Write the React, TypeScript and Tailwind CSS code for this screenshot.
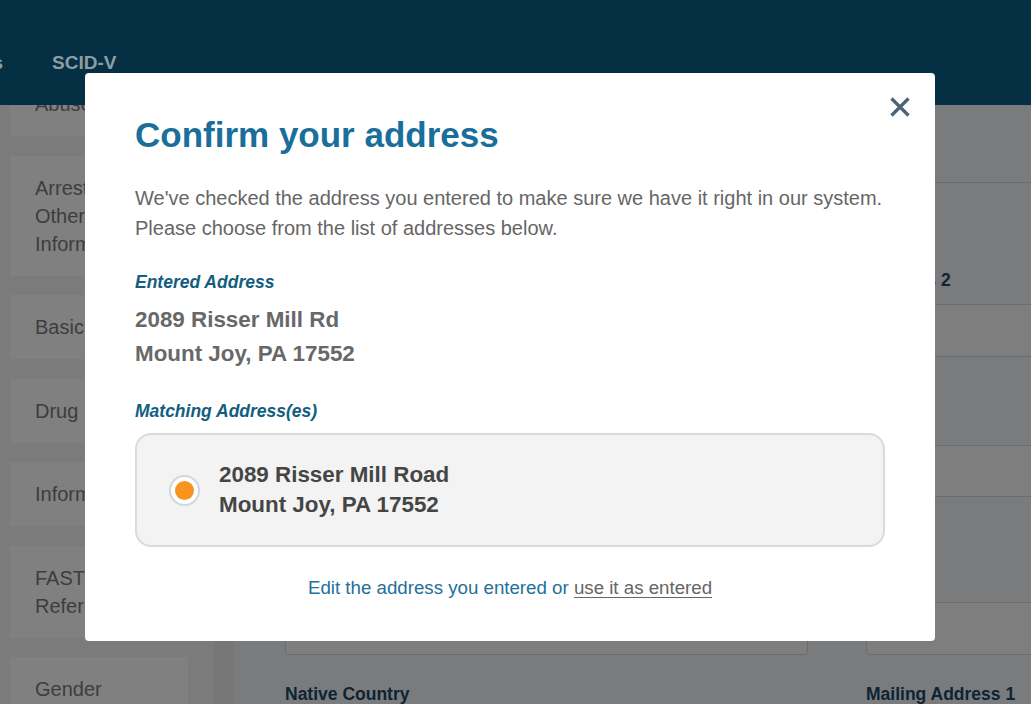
import React from "react";

function SideCard({ lines }: { lines: string[] }) {
  return (
    <div className="w-[178px] bg-[#808080] pl-[25px] py-[18px] text-[20px] leading-[28px] text-[#3d3d3d]">
      {lines.map((l, i) => (
        <div key={i} className="whitespace-nowrap">
          {l}
        </div>
      ))}
    </div>
  );
}

function Field({ label, h = "h-[53px]" }: { label: string; h?: string }) {
  return (
    <div>
      <div className="text-[17.5px] leading-[24px] font-bold text-[#0e2434] whitespace-nowrap">{label}</div>
      <div className={`mt-[12px] ${h} rounded-[4px] border border-[#6a6d70] bg-[#7e7e7e]`} />
    </div>
  );
}

export default function App() {
  return (
    <div className="relative h-[704px] w-[1031px] overflow-hidden bg-[#7a7b7d] font-['Liberation_Sans',Arial,sans-serif]">
      {/* header */}
      <header className="relative z-10 h-[105px] bg-[#052f42] flex items-start pt-[52px] text-[19px] leading-[22px] font-bold text-[#8e9ca4]">
        <div className="w-[3px] overflow-hidden flex justify-end">
          <span className="whitespace-nowrap">Reports</span>
        </div>
        <span className="ml-[49px] whitespace-nowrap">SCID-V</span>
      </header>

      {/* body */}
      <div className="flex h-[599px] overflow-hidden">
        <aside className="w-[213px] shrink-0 bg-[#7b7b7b] overflow-hidden">
          <div className="mt-[-61px] pl-[10px] flex flex-col gap-[19.5px]">
            <SideCard lines={["Child", "Abuse"]} />
            <SideCard lines={["Arrest and", "Other Legal", "Information"]} />
            <SideCard lines={["Basic Details"]} />
            <SideCard lines={["Drug Use"]} />
            <SideCard lines={["Informed Consent"]} />
            <SideCard lines={["FAST", "Referral"]} />
            <SideCard lines={["Gender", "Identity"]} />
          </div>
        </aside>
        <div className="w-[21px] shrink-0 bg-[#777777]" />
        <main className="flex-1 overflow-hidden pl-[51px]">
          <div className="h-[78px] border-b border-[#6a6d70] w-[1200px]" />
          <div className="grid grid-cols-[523px_523px] gap-x-[58px] w-[1104px]">
            <div className="mt-[85px]"><Field label="Address 1" /></div>
            <div className="mt-[85px]"><Field label="Address 2" /></div>
            <div className="mt-[52px]"><Field label="City" h="h-[52px]" /></div>
            <div className="mt-[52px]"><Field label="State" h="h-[52px]" /></div>
            <div className="mt-[69px]"><Field label="Zip Code" /></div>
            <div className="mt-[69px]"><Field label="County" /></div>
            <div className="mt-[27px] text-[17.5px] leading-[24px] font-bold text-[#0e2434]">Native Country</div>
            <div className="mt-[27px] text-[17.5px] leading-[24px] font-bold text-[#0e2434]">Mailing Address 1</div>
          </div>
        </main>
      </div>

      {/* modal */}
      <div className="absolute z-20 left-[85px] top-[73px] w-[850px] h-[568px] bg-white rounded-[4px] px-[50px] pt-[41px]">
        <button className="absolute left-[805px] top-[24px] w-[20px] h-[20px]" aria-label="Close">
          <svg width="20" height="20" viewBox="0 0 20 20">
            <path d="M1.5 1.5 L18.5 18.5 M18.5 1.5 L1.5 18.5" stroke="#4b6475" strokeWidth="3.2" fill="none" />
          </svg>
        </button>
        <h2 className="text-[35px] leading-[42px] font-bold text-[#1a6f9a] whitespace-nowrap">Confirm your address</h2>
        <p className="mt-[27px] text-[20px] leading-[30px] text-[#666666]">
          <span className="block whitespace-nowrap">We've checked the address you entered to make sure we have it right in our system.</span>
          <span className="block whitespace-nowrap">Please choose from the list of addresses below.</span>
        </p>
        <div className="mt-[26px] text-[17.5px] leading-[26px] font-bold italic text-[#135e7f]">Entered Address</div>
        <div className="mt-[8px] text-[22.4px] leading-[34px] font-bold text-[#686868]">
          <div>2089 Risser Mill Rd</div>
          <div>Mount Joy, PA 17552</div>
        </div>
        <div className="mt-[27px] text-[17.5px] leading-[26px] font-bold italic text-[#135e7f]">Matching Address(es)</div>
        <div className="mt-[9px] border-2 border-[#d3dde1] rounded-[16px] bg-[#f3f3f3] py-[25px] pl-[32px] flex items-center gap-[19px]">
          <div className="w-[31px] h-[31px] rounded-full border-2 border-[#cfd8dc] bg-white flex items-center justify-center">
            <div className="w-[19px] h-[19px] rounded-full bg-[#f7941d]" />
          </div>
          <div className="text-[22.4px] leading-[30px] font-bold text-[#454545]">
            <div>2089 Risser Mill Road</div>
            <div>Mount Joy, PA 17552</div>
          </div>
        </div>
        <div className="mt-[27px] text-center text-[18.7px] leading-[27px] text-[#23709a]">
          Edit the address you entered or <span className="text-[#666666] underline underline-offset-[3px]">use it as entered</span>
        </div>
      </div>
    </div>
  );
}
